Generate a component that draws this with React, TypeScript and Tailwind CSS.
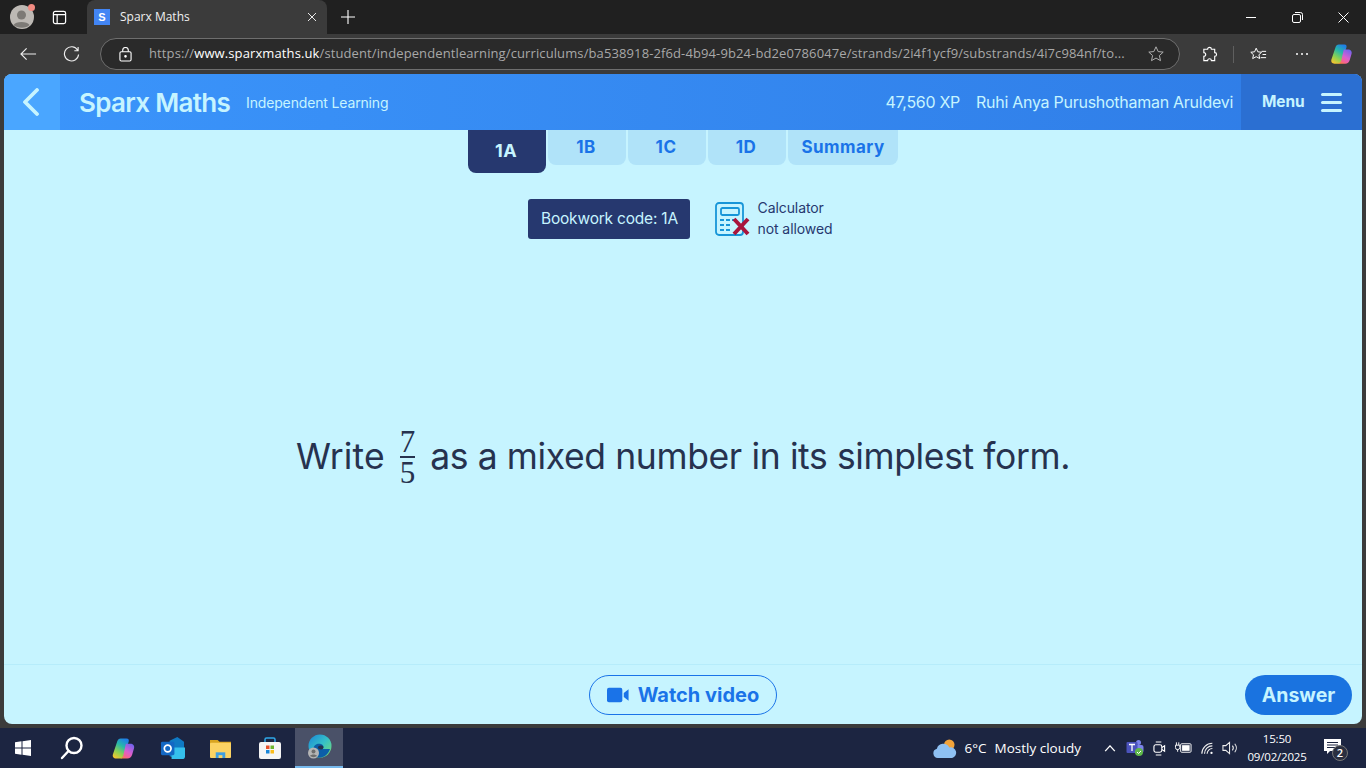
import React from "react";

const TaskIcon = ({ children, className = "" }: { children: React.ReactNode; className?: string }) => (
  <div className={`flex h-10 items-center justify-center ${className}`}>{children}</div>
);

const Copilot = ({ id, className }: { id: string; className: string }) => (
  <svg viewBox="0 0 24 24" className={className}>
    <defs>
      <linearGradient id={`${id}a`} x1="0.7" y1="0" x2="0.2" y2="1">
        <stop offset="0" stopColor="#1f7fe8" />
        <stop offset="0.35" stopColor="#27b8a8" />
        <stop offset="0.7" stopColor="#8fd14f" />
        <stop offset="1" stopColor="#f6c52f" />
      </linearGradient>
      <linearGradient id={`${id}b`} x1="0.8" y1="0" x2="0.2" y2="1">
        <stop offset="0" stopColor="#6f63ee" />
        <stop offset="0.5" stopColor="#d85fd0" />
        <stop offset="0.8" stopColor="#f7628f" />
        <stop offset="1" stopColor="#f78a3a" />
      </linearGradient>
    </defs>
    <path d="M9 1.500h6c2.500 0 3 1.800 2.300 3.700l-5 14.500c-.6 1.800-2 2.800-3.800 2.800H4.500C1.500 22.500.2 20.400 1 18L5.500 4.500C6.100 2.600 7.300 1.500 9 1.500z" fill={`url(#${id}a)`} />
    <path d="M14.500 7H19c3 0 4.800 2.200 4 4.800l-2 6.700c-.7 2.500-2.400 4-5 4H7c2.500 0 4-1 4.800-3.300z" fill={`url(#${id}b)`} />
  </svg>
);

export default function App() {
  return (
    <div className="flex h-[768px] w-[1366px] flex-col overflow-hidden bg-[#3b3b3b] font-['Inter',sans-serif]">
      {/* Title bar */}
      <div className="flex h-[34px] items-end bg-[#202020]">
        <div className="flex h-[34px] w-[87px] items-center pl-[10px]">
          <div className="relative h-6 w-6 rounded-full bg-[#bdb9b4]">
            <svg viewBox="0 0 24 24" className="h-6 w-6">
              <circle cx="11.500" cy="10" r="4.500" fill="#7d7a76" />
              <path d="M3.500 20c2-4 14-4 16 0-3 3.500-12 3.500-16 0z" fill="#7d7a76" />
            </svg>
            <div className="absolute right-[-1px] top-[-1px] h-[7px] w-[7px] rounded-full bg-[#f28b82]" />
          </div>
          <svg viewBox="0 0 16 16" className="ml-[18px] h-[15px] w-[15px]" fill="none" stroke="#fff" strokeWidth="1.300">
            <rect x="1.500" y="1.500" width="13" height="13" rx="2" />
            <path d="M1.500 5h13M5.500 5v9.500" />
          </svg>
        </div>
        <div className="flex h-[34px] w-[240px] items-center rounded-t-lg bg-[#3b3b3b] pl-[7px] pr-[10px]">
          <div className="flex h-4 w-4 items-center justify-center bg-[#4285f4] font-['Liberation_Sans',sans-serif] text-[11px] font-bold text-white">S</div>
          <span className="ml-[10px] flex-1 font-['Open_Sans',sans-serif] text-[12px] text-[#f0f0f0]">Sparx Maths</span>
          <svg viewBox="0 0 10 10" className="h-[10px] w-[10px]" stroke="#e8e8e8" strokeWidth="1">
            <path d="M1 1l8 8M9 1l-8 8" />
          </svg>
        </div>
        <div className="flex h-[34px] flex-1 items-center pl-[14px]">
          <svg viewBox="0 0 14 14" className="h-[14px] w-[14px]" stroke="#fff" strokeWidth="1.100">
            <path d="M7 0v14M0 7h14" />
          </svg>
          <div className="ml-auto flex items-center">
            <div className="flex w-[47px] justify-center">
              <div className="h-px w-[10px] bg-white" />
            </div>
            <div className="flex w-[46px] justify-center">
              <svg viewBox="0 0 11 11" className="h-[11px] w-[11px]" fill="none" stroke="#fff">
                <rect x="0.500" y="2.500" width="8" height="8" rx="1.500" />
                <path d="M3 0.500h5.500a2 2 0 0 1 2 2V8" />
              </svg>
            </div>
            <div className="flex w-[46px] justify-center">
              <svg viewBox="0 0 11 11" className="h-[11px] w-[11px]" stroke="#fff">
                <path d="M0.500 0.500l10 10M10.500 0.500l-10 10" />
              </svg>
            </div>
          </div>
        </div>
      </div>

      {/* Toolbar */}
      <div className="flex h-10 items-center">
        <div className="flex w-[100px] items-center pl-[20px]">
          <svg viewBox="0 0 18 14" className="h-[14px] w-[17px]" fill="none" stroke="#eee" strokeWidth="1.200">
            <path d="M17 7H1M7 1L1 7l6 6" />
          </svg>
          <svg viewBox="0 0 18 18" className="ml-[26px] h-[17px] w-[17px]" fill="none" stroke="#eee" strokeWidth="1.200">
            <path d="M15.500 4.500A7.500 7.500 0 1 0 16.500 9M16 1v4h-4" />
          </svg>
        </div>
        <div className="flex h-8 w-[1080px] items-center rounded-full border border-[#6e6e6e] bg-[#2a2a2a] pl-[18px] pr-[14px]">
          <svg viewBox="0 0 14 16" className="h-[15px] w-[13px]" fill="none" stroke="#fff" strokeWidth="1.200">
            <rect x="1" y="5" width="12" height="10" rx="1.500" />
            <path d="M4 5V3.500a3 3 0 0 1 6 0V5" />
            <circle cx="7" cy="10" r="0.800" fill="#fff" />
          </svg>
          <div className="ml-[17px] flex-1 truncate whitespace-nowrap font-['Open_Sans',sans-serif] text-[13px] tracking-[0.11px] text-[#a8a8a8]">
            https://<span className="text-white">www.sparxmaths.uk</span>/student/independentlearning/curriculums/ba538918-2f6d-4b94-9b24-bd2e0786047e/strands/2i4f1ycf9/substrands/4i7c984nf/to...
          </div>
          <svg viewBox="0 0 20 20" className="h-[18px] w-[18px] shrink-0" fill="none" stroke="#b0b0b0" strokeWidth="1.100">
            <path d="M10 2l2.400 5.300 5.600.600-4.200 3.800 1.200 5.700L10 14.500l-5 2.900 1.200-5.700L2 7.900l5.600-.600z" />
          </svg>
        </div>
        <div className="flex flex-1 items-center pl-[21px]">
          <svg viewBox="0 0 18 18" className="h-[17px] w-[17px]" fill="none" stroke="#fff" strokeWidth="1.200">
            <path d="M7 3.500a2 2 0 0 1 4 0h3.500V7a2 2 0 0 1 0 4v4.500H11a2 2 0 0 0-4 0H3V11a2 2 0 0 0 0-4V3.500z" />
          </svg>
          <div className="ml-[15px] h-[17px] w-px bg-[#5f5f5f]" />
          <svg viewBox="0 0 20 18" className="ml-[15px] h-[17px] w-[18px]" fill="none" stroke="#fff" strokeWidth="1.100">
            <path d="M8 2l1.800 4 4.200.500-3 2.800.900 4.200L8 11.400l-3.900 2.100.900-4.200-3-2.800 4.200-.500zM14 5.500h5M15 9h4M13 12.500h6" />
          </svg>
          <div className="ml-[29px] flex gap-[3px]">
            <div className="h-[2px] w-[2px] rounded-full bg-white" />
            <div className="h-[2px] w-[2px] rounded-full bg-white" />
            <div className="h-[2px] w-[2px] rounded-full bg-white" />
          </div>
          <Copilot id="cp" className="ml-[22px] h-[22px] w-[23px]" />
        </div>
      </div>

      {/* Page */}
      <div className="mx-1 flex h-[650px] flex-col overflow-hidden rounded-lg bg-[#c6f4ff]">
        <header className="flex h-14 items-center bg-gradient-to-r from-[#3b95fb] to-[#2f7ce6] text-[#c6f4ff]">
          <div className="flex h-14 w-14 items-center justify-center bg-[#4aa6ff]">
            <svg viewBox="0 0 18 28" className="mr-[3px] h-7 w-[18px]" fill="none" stroke="#c6f4ff" strokeWidth="3.800" strokeLinecap="round" strokeLinejoin="round">
              <path d="M15 2L3 14l12 12" />
            </svg>
          </div>
          <div className="ml-[19px] text-[26px] font-semibold tracking-[-0.7px]">Sparx Maths</div>
          <div className="ml-[16px] text-[14px] tracking-[-0.15px]">Independent Learning</div>
          <div className="ml-auto text-[16px] tracking-[-0.3px]">47,560 XP</div>
          <div className="ml-[16px] text-[16px] tracking-[-0.27px]">Ruhi Anya Purushothaman Aruldevi</div>
          <div className="ml-[8px] flex h-14 w-[121px] items-center bg-[#2b6fd2] pl-[21px]">
            <span className="text-[15.500px] font-bold tracking-[-0.1px]">Menu</span>
            <div className="ml-[16px] flex flex-col gap-[5px]">
              <div className="h-[3px] w-[21px] rounded-full bg-[#c6f4ff]" />
              <div className="h-[3px] w-[21px] rounded-full bg-[#c6f4ff]" />
              <div className="h-[3px] w-[21px] rounded-full bg-[#c6f4ff]" />
            </div>
          </div>
        </header>

        <div className="flex flex-1 flex-col items-center">
          <div className="flex items-start gap-[2px]">
            <div className="flex h-[43px] w-[78px] items-center justify-center rounded-b-lg bg-[#26386f] pb-[2px] pr-[2px] text-[18px] font-bold tracking-[0.3px] text-[#c6f4ff]">1A</div>
            {["1B", "1C", "1D"].map((t) => (
              <div key={t} className="flex h-[35px] w-[78px] items-center justify-center rounded-b-lg bg-[#b0e3f9] pr-[2px] text-[17px] font-bold tracking-[0.5px] text-[#1a73e8]">{t}</div>
            ))}
            <div className="flex h-[35px] w-[110px] items-center justify-center rounded-b-lg bg-[#b0e3f9] text-[17px] font-bold tracking-[0.45px] text-[#1a73e8]">Summary</div>
          </div>

          <div className="mr-[5px] mt-[26px] flex h-10 items-center">
            <div className="flex h-10 w-[162px] items-center justify-center rounded-[3px] bg-[#26386f] text-[15.500px] tracking-[-0.2px] text-[#c6f4ff]">Bookwork code: 1A</div>
            <svg viewBox="0 0 36 36" className="ml-[24px] h-[36px] w-[36px]" fill="none">
              <rect x="2" y="2" width="27" height="32" rx="3" stroke="#1795d8" strokeWidth="1.800" />
              <rect x="7" y="7" width="18" height="7" rx="1.500" stroke="#1795d8" strokeWidth="1.800" />
              <path d="M6 19h4M12 19h4M18 19h3M6 24h4M12 24h4M6 29h4M12 29h4" stroke="#1795d8" strokeWidth="2" />
              <path d="M20 18l14 15M34 18L20 33" stroke="#a8143c" strokeWidth="4" />
            </svg>
            <div className="ml-[7px] mb-[2px] text-[14px] leading-[21px] tracking-[-0.08px] text-[#26386f]">
              <div>Calculator</div>
              <div>not allowed</div>
            </div>
          </div>

          <div className="mt-[189px] flex items-center text-[#26324f]">
            <span className="text-[35.500px] tracking-[0.1px]">Write</span>
            <div className="mx-[15px] flex flex-col items-center font-['Liberation_Serif',serif] text-[31px] leading-[27px]">
              <span>7</span>
              <div className="my-[1px] h-[1.500px] w-[15px] bg-[#26324f]" />
              <span>5</span>
            </div>
            <span className="text-[35.500px] tracking-[-0.38px]">as a mixed number in its simplest form.</span>
          </div>
        </div>

        <footer className="relative flex h-[60px] items-center justify-center border-t border-[#b6ecfb]">
          <div className="flex h-10 w-[188px] items-center justify-center rounded-full border border-[#1a73e8] text-[20px] font-bold text-[#1a73e8]">
            <svg viewBox="0 0 24 16" className="mr-[8px] h-[16px] w-[23px]" fill="#1a73e8">
              <rect x="0" y="0.500" width="16" height="15" rx="2" />
              <path d="M17.500 6l5-4v12l-5-4z" />
            </svg>
            Watch video
          </div>
          <div className="absolute right-[10px] top-[10px] flex h-10 w-[107px] items-center justify-center rounded-full bg-[#1a73e0] pt-[1px] text-[19.500px] font-bold text-[#c6f4ff]">Answer</div>
        </footer>
      </div>

      <div className="h-1" />

      {/* Taskbar */}
      <div className="flex h-10 items-center bg-[#1c2541] font-['Open_Sans',sans-serif] text-white">
        <TaskIcon className="w-[46px]">
          <svg viewBox="0 0 16 16" className="h-[16px] w-[16px]" fill="#fff">
            <path d="M0 2.200l6.500-.9v6.300H0zM7.500 1.200L16 0v7.600H7.500zM0 8.500h6.500v6.300L0 13.800zM7.500 8.500H16V16l-8.500-1.200z" />
          </svg>
        </TaskIcon>
        <TaskIcon className="w-[52px]">
          <svg viewBox="0 0 24 24" className="h-[24px] w-[24px]" fill="none" stroke="#fff" strokeWidth="2.400">
            <circle cx="14" cy="9.500" r="7.500" />
            <path d="M8.500 15l-6.500 7" strokeLinecap="round" />
          </svg>
        </TaskIcon>
        <TaskIcon className="w-[50px]">
          <Copilot id="cq" className="h-[23px] w-[23px]" />
        </TaskIcon>
        <TaskIcon className="w-[48px]">
          <svg viewBox="0 0 26 26" className="h-[25px] w-[25px]">
            <path d="M10 5l8-4 7 5v13l-7 5-8-3z" fill="#0f7ac4" />
            <path d="M12 12h14v9a3 3 0 0 1-3 3H12z" fill="#35c0ec" />
            <rect x="1" y="6" width="14" height="14" rx="1.500" fill="#1368c4" />
            <circle cx="8" cy="13" r="3.500" fill="none" stroke="#fff" strokeWidth="1.800" />
          </svg>
        </TaskIcon>
        <TaskIcon className="w-[48px]">
          <svg viewBox="0 0 24 22" className="h-[21px] w-[23px]">
            <path d="M1 2h8l2 2h12v4H1z" fill="#d9a520" />
            <rect x="1" y="5" width="22" height="16" rx="1" fill="#fbd363" />
            <path d="M7 15h10v6H7z" fill="#3f9fe0" />
            <path d="M10 18h4v3h-4z" fill="#fbd363" />
          </svg>
        </TaskIcon>
        <TaskIcon className="w-[51px]">
          <svg viewBox="0 0 24 24" className="h-[24px] w-[24px]">
            <path d="M7 7V3.500A1.500 1.500 0 0 1 8.500 2h7A1.500 1.500 0 0 1 17 3.500V7" fill="none" stroke="#2fa8e8" strokeWidth="1.500" />
            <rect x="1" y="6" width="22" height="17" rx="2" fill="#f5f5f5" />
            <rect x="8" y="9.500" width="3.500" height="3.500" fill="#e8502a" />
            <rect x="12.500" y="9.500" width="3.500" height="3.500" fill="#6cb52d" />
            <rect x="8" y="14" width="3.500" height="3.500" fill="#1a86d8" />
            <rect x="12.500" y="14" width="3.500" height="3.500" fill="#fbbc1a" />
          </svg>
        </TaskIcon>
        <TaskIcon className="w-[48px] border-b-[2px] border-[#76b9ed] bg-[#4a5168]">
          <svg viewBox="0 0 26 26" className="h-[26px] w-[26px]">
            <defs>
              <linearGradient id="edge" x1="0" y1="0" x2="1" y2="1">
                <stop offset="0" stopColor="#1a86d8" />
                <stop offset="0.500" stopColor="#35c0c8" />
                <stop offset="1" stopColor="#7ee06a" />
              </linearGradient>
            </defs>
            <circle cx="14" cy="12" r="11.500" fill="url(#edge)" />
            <path d="M7 15c1-5 5-6 8-5 3 1 3 4 1 5h8c-2 6-6 8.500-11 8.500-4 0-7-3-6-8.500z" fill="#0c5ea8" />
            <path d="M12 13c1-2 5-2 5.500 0 .3 1.500-1 2.500-2.500 2.500-2 0-3.500-1-3-2.500z" fill="#26304c" />
            <circle cx="7.500" cy="19" r="5.500" fill="#b5b5b5" />
            <circle cx="7.500" cy="17.500" r="2" fill="#6e6e6e" />
            <path d="M4 22c1-2 6-2 7 0-2 1.500-5 1.500-7 0z" fill="#6e6e6e" />
          </svg>
        </TaskIcon>

        <div className="ml-auto flex items-center">
          <svg viewBox="0 0 26 22" className="h-[21px] w-[25px]">
            <circle cx="18" cy="7" r="5.500" fill="#f2a33a" />
            <path d="M6 21a5 5 0 0 1-1-9.800A7 7 0 0 1 18 10a5.500 5.500 0 0 1 3 11z" fill="#8ec0f2" />
          </svg>
          <span className="ml-[8px] text-[13.500px]">6°C</span>
          <span className="ml-[8px] text-[13.500px]">Mostly cloudy</span>
          <svg viewBox="0 0 12 8" className="ml-[23px] h-[7px] w-[12px]" fill="none" stroke="#fff" strokeWidth="1.500">
            <path d="M0.500 7l5.500-6 5.500 6" />
          </svg>
          <svg viewBox="0 0 18 18" className="ml-[10px] h-[18px] w-[18px]">
            <circle cx="12.500" cy="3.500" r="2.500" fill="#7b83eb" />
            <rect x="9" y="6" width="8.500" height="8" rx="2" fill="#7b83eb" />
            <rect x="0.500" y="3" width="11" height="11" rx="1" fill="#4b53bc" />
            <path d="M3 5.500h6M6 5.500V12" stroke="#fff" strokeWidth="1.300" />
            <circle cx="13" cy="13" r="4" fill="#5fb84a" />
            <path d="M11 13l1.500 1.500L15 12" fill="none" stroke="#fff" />
          </svg>
          <svg viewBox="0 0 14 18" className="ml-[9px] h-[17px] w-[13px]" fill="none" stroke="#fff" strokeWidth="1.200">
            <rect x="1" y="5" width="8.500" height="8" rx="2" />
            <path d="M9.500 8l3-2v6l-3-2M3 2h6M3 16h6" />
          </svg>
          <svg viewBox="0 0 18 12" className="ml-[9px] h-[12px] w-[17px]" fill="none">
            <path d="M1.500 0v3M4 0v3M0.500 3h4.500v2.500a2 2 0 0 1-4.500 0zM2.800 7.500V10" stroke="#fff" />
            <rect x="6" y="1.500" width="11" height="9" rx="1" stroke="#fff" />
            <rect x="7.500" y="3" width="8" height="6" fill="#fff" />
          </svg>
          <svg viewBox="0 0 16 14" className="ml-[9px] h-[13px] w-[14px]" fill="none" stroke="#eee" strokeWidth="1.300">
            <path d="M1 13A12 12 0 0 1 13 1M4 13a9 9 0 0 1 9-9M7 13a6 6 0 0 1 6-6" />
            <circle cx="12" cy="12" r="1.300" fill="#fff" stroke="none" />
          </svg>
          <svg viewBox="0 0 18 14" className="ml-[7px] h-[14px] w-[17px]" fill="none" stroke="#eee" strokeWidth="1.100">
            <path d="M1 4.500h3l4-3.500v12l-4-3.500H1zM11 4.500a4 4 0 0 1 0 5M13.500 2.500a7 7 0 0 1 0 9" />
          </svg>
          <div className="ml-[9px] flex w-[58px] flex-col items-center text-[11.500px] leading-[18px] tracking-[-0.2px]">
            <span>15:50</span>
            <span>09/02/2025</span>
          </div>
          <div className="relative ml-[18px] mr-[21px] h-5 w-[21px]">
            <svg viewBox="0 0 17 15" className="absolute left-0 top-[1px] h-[15px] w-[17px]">
              <path d="M0 0h17v12H6l-3 3v-3H0z" fill="#fff" />
              <path d="M3 3.500h11M3 6h11M3 8.500h8" stroke="#1c2541" />
            </svg>
            <div className="absolute bottom-[-3px] right-[-3px] flex h-4 w-4 items-center justify-center rounded-full border border-[#777] bg-[#2a2f40] text-[11px] font-semibold">2</div>
          </div>
        </div>
      </div>
    </div>
  );
}
